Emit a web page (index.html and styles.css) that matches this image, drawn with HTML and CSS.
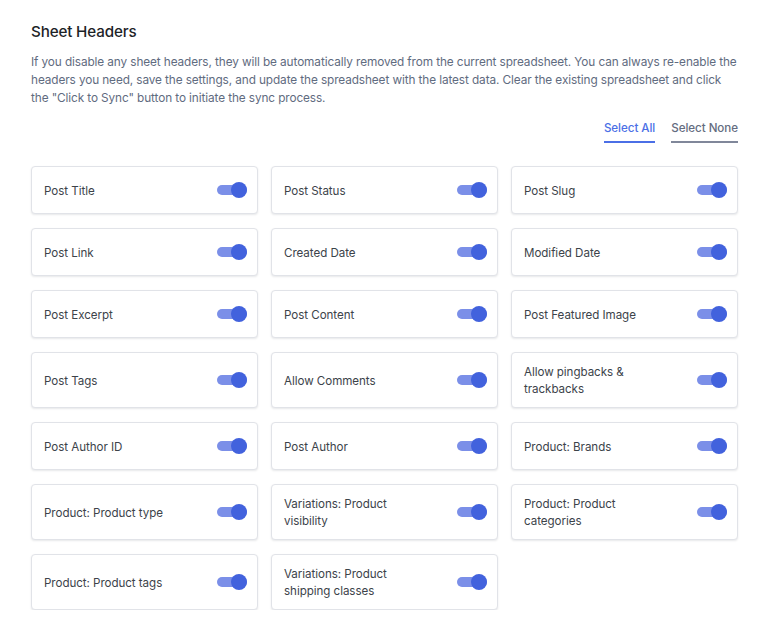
FILE: index.html
```html
<!DOCTYPE html>
<html lang="en">
<head>
<meta charset="utf-8">
<title>Sheet Headers</title>
<link rel="stylesheet" href="styles.css">
</head>
<body>
<main class="page">
  <h1 class="title">Sheet Headers</h1>
  <p class="desc">If you disable any sheet headers, they will be automatically removed from the current spreadsheet. You can always re-enable the<br>headers you need, save the settings, and update the spreadsheet with the latest data. Clear the existing spreadsheet and click<br>the "Click to Sync" button to initiate the sync process.</p>
  <div class="actions">
    <a class="action action-all" href="#">Select All</a>
    <a class="action action-none" href="#">Select None</a>
  </div>
  <div class="grid">
    <div class="card"><span class="label">Post Title</span><span class="toggle"></span></div>
    <div class="card"><span class="label">Post Status</span><span class="toggle"></span></div>
    <div class="card"><span class="label">Post Slug</span><span class="toggle"></span></div>
    <div class="card"><span class="label">Post Link</span><span class="toggle"></span></div>
    <div class="card"><span class="label">Created Date</span><span class="toggle"></span></div>
    <div class="card"><span class="label">Modified Date</span><span class="toggle"></span></div>
    <div class="card"><span class="label">Post Excerpt</span><span class="toggle"></span></div>
    <div class="card"><span class="label">Post Content</span><span class="toggle"></span></div>
    <div class="card"><span class="label">Post Featured Image</span><span class="toggle"></span></div>
    <div class="card"><span class="label">Post Tags</span><span class="toggle"></span></div>
    <div class="card"><span class="label">Allow Comments</span><span class="toggle"></span></div>
    <div class="card"><span class="label">Allow pingbacks &amp;<br>trackbacks</span><span class="toggle"></span></div>
    <div class="card"><span class="label">Post Author ID</span><span class="toggle"></span></div>
    <div class="card"><span class="label">Post Author</span><span class="toggle"></span></div>
    <div class="card"><span class="label">Product: Brands</span><span class="toggle"></span></div>
    <div class="card"><span class="label">Product: Product type</span><span class="toggle"></span></div>
    <div class="card"><span class="label">Variations: Product<br>visibility</span><span class="toggle"></span></div>
    <div class="card"><span class="label">Product: Product<br>categories</span><span class="toggle"></span></div>
    <div class="card"><span class="label">Product: Product tags</span><span class="toggle"></span></div>
    <div class="card"><span class="label">Variations: Product<br>shipping classes</span><span class="toggle"></span></div>
  </div>
</main>
</body>
</html>
```

FILE: styles.css
```css
* { box-sizing: border-box; }
html, body { margin: 0; padding: 0; background: #ffffff; }
body {
  font-family: Inter, "Noto Sans", "Liberation Sans", sans-serif;
  color: #3c434a;
}
.page {
  padding: 21px 30px 0 31px;
}
.title {
  margin: 0;
  font-size: 15.2px;
  letter-spacing: -0.15px;
  line-height: 22px;
  font-weight: 500;
  color: #1d2327;
}
.desc {
  margin: 10px -12px 0 0;
  font-size: 11.8px;
  letter-spacing: -0.1px;
  line-height: 18px;
  color: #5f6b80;
  white-space: nowrap;
}
.actions {
  display: flex;
  justify-content: flex-end;
  gap: 16px;
  margin-top: 12px;
}
.action {
  font-size: 11.6px;
  letter-spacing: -0.05px;
  line-height: 18px;
  font-weight: 500;
  text-decoration: none;
  padding-bottom: 4px;
  border-bottom: 2px solid;
}
.action-all { color: #4b6fe6; border-color: #4b6fe6; }
.action-none { color: #646c80; border-color: #80879a; }
.grid {
  display: grid;
  grid-template-columns: repeat(3, 1fr);
  column-gap: 13px;
  row-gap: 14px;
  margin-top: 23px;
}
.card {
  display: flex;
  align-items: center;
  justify-content: space-between;
  min-height: 48px;
  padding: 11px 10px 9px 12px;
  border: 1px solid #e1e3e8;
  border-radius: 4px;
  background: #fff;
  box-shadow: 0 1px 2px rgba(20, 30, 50, 0.10);
}
.label {
  font-size: 11.6px;
  letter-spacing: -0.05px;
  line-height: 17px;
  color: #3c434a;
}
.toggle {
  position: relative;
  flex: none;
  width: 30px;
  height: 10px;
  border-radius: 5px;
  background: #7b8fe8;
  margin-left: 10px;
  margin-top: -3px;
}
.toggle::after {
  content: "";
  position: absolute;
  right: 0;
  top: -3px;
  width: 16px;
  height: 16px;
  border-radius: 50%;
  background: #4262dd;
}
```
